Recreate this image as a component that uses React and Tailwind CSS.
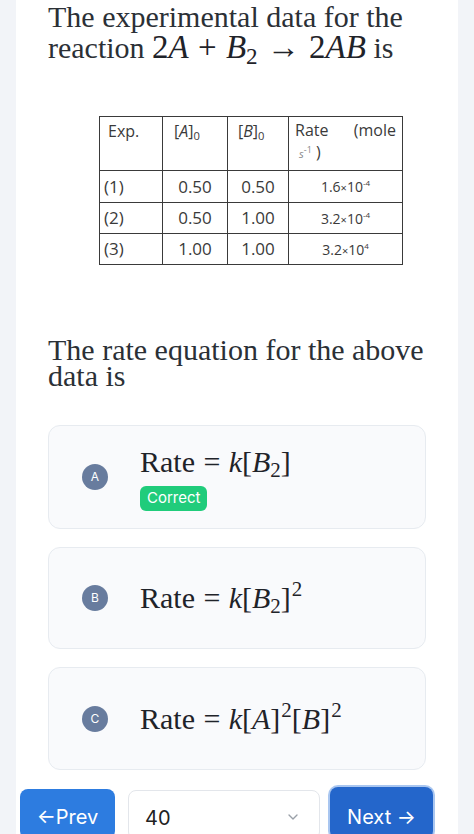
import React from 'react';
import { ChevronDown } from 'lucide-react';

const serif = { fontFamily: '"Liberation Serif", "Times New Roman", serif' };

// KaTeX-like bits
const I = ({ children }) => <span className="italic">{children}</span>;
const Sub = ({ children }) => (
  <span className="relative top-[0.25em] text-[0.7em] leading-none">{children}</span>
);
const Sup = ({ children }) => (
  <span className="relative -top-[0.55em] text-[0.7em] leading-none ml-[1px]">{children}</span>
);
const Op = ({ children }) => <span className="mx-[0.28em]">{children}</span>;

function Circle({ letter }) {
  return (
    <div className="flex items-center justify-center w-[26px] h-[26px] rounded-full bg-[#687c9e] text-white text-[12px] font-['Inter',sans-serif] shrink-0">
      {letter}
    </div>
  );
}

function OptionCard({ letter, height, children, correct }) {
  return (
    <div
      className={`flex items-center rounded-xl border border-[#e7ebf0] bg-[#f9fafc] pl-[33px] gap-[32px] ${height}`}
    >
      <Circle letter={letter} />
      <div className="flex flex-col">
        <div className="text-[30px] leading-[36px] text-[#1f2329]" style={serif}>
          {children}
        </div>
        {correct && (
          <div className="mt-[6px] self-start h-[25px] px-[7px] flex items-center rounded-md bg-[#20cc7b] text-white text-[15px] font-['Inter',sans-serif]">
            Correct
          </div>
        )}
      </div>
    </div>
  );
}

export default function App() {
  const tableFont = { fontFamily: '"Open Sans", "Liberation Sans", sans-serif' };
  return (
    <div className="min-h-screen bg-[#f2f4f8] px-[16px] overflow-hidden">
      <div className="bg-white pb-[40px]">
        <div className="px-[32px] pt-[3px] text-[#2b3036]" style={serif}>
          {/* Question */}
          <p className="text-[30px] leading-[28px]">
            The experimental data for the reaction{' '}
            <span className="text-[33px] leading-none text-[#1f2329]">
              2<I>A</I>
              <Op>+</Op>
              <I>B</I>
              <Sub>2</Sub>
              <Op>→</Op>2<I>AB</I>
            </span>{' '}
            is
          </p>

          {/* Data table */}
          <table
            className="ml-[51px] mt-[52px] border-collapse border border-[#3a3a3a] text-[#3a3a3a]"
            style={tableFont}
          >
            <tbody>
              <tr className="h-[54px] align-top text-[16px]">
                <td className="w-[63px] border border-[#3a3a3a] pl-[8px] pt-[2px]">Exp.</td>
                <td className="w-[65px] border border-[#3a3a3a] pl-[11px] pt-[2px]">
                  [<I>A</I>]<Sub>0</Sub>
                </td>
                <td className="w-[61px] border border-[#3a3a3a] pl-[10px] pt-[2px]">
                  [<I>B</I>]<Sub>0</Sub>
                </td>
                <td className="w-[114px] border border-[#3a3a3a] pl-[6px] pr-[6px] pt-[2px] leading-[22px]">
                  <div className="flex justify-between">
                    <span>Rate</span>
                    <span>(mole</span>
                  </div>
                  <div>
                    <span className="italic text-[11px] text-[#888] ml-[4px]">s</span>
                    <span className="text-[9px] text-[#888] relative -top-[5px]">-1</span> )
                  </div>
                </td>
              </tr>
              {[
                ['(1)', '0.50', '0.50', '1.6', '-4'],
                ['(2)', '0.50', '1.00', '3.2', '-4'],
                ['(3)', '1.00', '1.00', '3.2', '4'],
              ].map((r, i) => (
                <tr key={r[0]} className={`${i === 0 ? 'h-[32px]' : 'h-[31px]'} text-[17px]`}>
                  <td className="border border-[#3a3a3a] pl-[4px]">{r[0]}</td>
                  <td className="border border-[#3a3a3a] text-center">{r[1]}</td>
                  <td className="border border-[#3a3a3a] text-center">{r[2]}</td>
                  <td className="border border-[#3a3a3a] text-center text-[14px]">
                    {r[3]}
                    <span className="text-[11px]">×</span>10
                    <span className="text-[8px] relative -top-[6px]">{r[4]}</span>
                  </td>
                </tr>
              ))}
            </tbody>
          </table>

          <p className="mt-[72px] text-[30px] leading-[26px]">
            The rate equation for the above data is
          </p>

          {/* Options */}
          <div className="mt-[36px] flex flex-col gap-[18px]">
            <OptionCard letter="A" height="h-[104px]" correct>
              Rate<Op>=</Op>
              <I>k</I>[<I>B</I>
              <Sub>2</Sub>]
            </OptionCard>
            <OptionCard letter="B" height="h-[102px]">
              Rate<Op>=</Op>
              <I>k</I>[<I>B</I>
              <Sub>2</Sub>]<Sup>2</Sup>
            </OptionCard>
            <OptionCard letter="C" height="h-[103px]">
              Rate<Op>=</Op>
              <I>k</I>[<I>A</I>]<Sup>2</Sup>[<I>B</I>]<Sup>2</Sup>
            </OptionCard>
          </div>
        </div>

        {/* Pager */}
        <div className="mt-[19px] pl-[4px] flex items-start font-['Inter',sans-serif]">
          <button className="w-[95px] h-[50px] rounded-lg bg-[#2d7ce0] text-white text-[20px] flex items-start justify-center pt-[13px]">
            ←Prev
          </button>
          <div className="ml-[13px] mt-[1px] w-[192px] h-[50px] rounded-lg border border-[#e3e6eb] bg-white flex items-start justify-between pl-[16px] pr-[18px] pt-[12px] text-[20px] text-[#222]">
            <span>40</span>
            <ChevronDown size={16} className="text-[#9aa0a8] mt-[6px]" />
          </div>
          <button className="ml-[10px] -mt-[2px] w-[103px] h-[52px] rounded-lg bg-[#2466cb] ring-2 ring-[#a9c6f0] text-white text-[20px] flex items-start justify-center pt-[15px]">
            Next →
          </button>
        </div>
      </div>
    </div>
  );
}
